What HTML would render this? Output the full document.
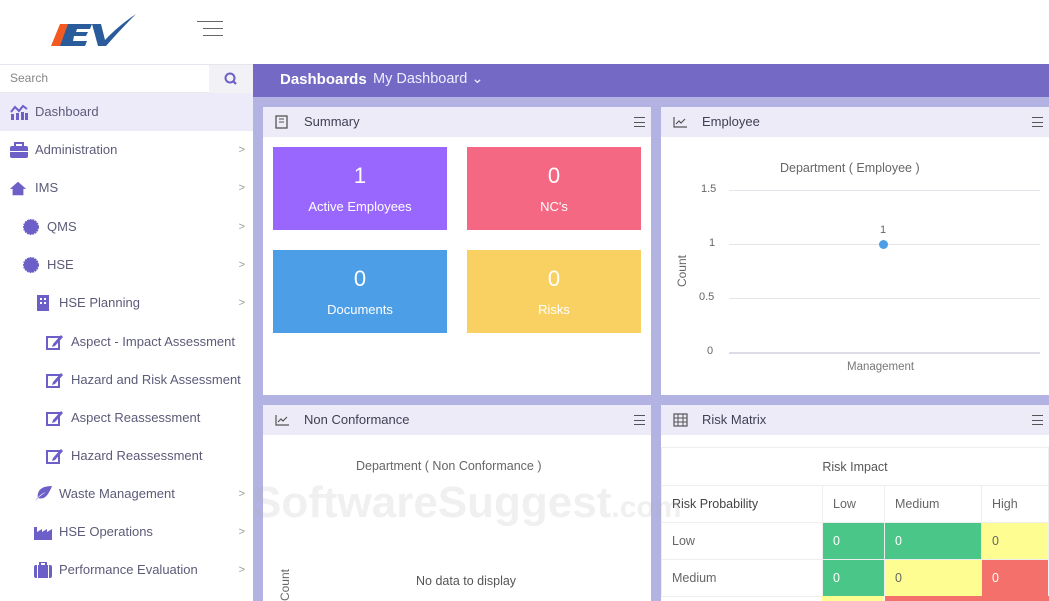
<!DOCTYPE html>
<html><head><meta charset="utf-8"><style>
*{box-sizing:border-box;margin:0;padding:0}
html,body{width:1049px;height:601px;overflow:hidden}
body{background:#fff;font-family:"Liberation Sans",sans-serif;font-size:13px;color:#555a6e;position:relative}
.abs{position:absolute}
.side{left:0;top:64px;width:253px;height:537px;background:#fff;border-top:1px solid #e6e6ee}
.item{position:absolute;left:0;width:253px;height:38px;line-height:38px;color:#5c5b78;font-size:13px}
.item .ic{position:absolute;top:11px;width:18px;height:16px}
.item .arr{position:absolute;right:8px;top:0;color:#999;font-size:11px}
.main{left:253px;top:64px;width:796px;height:537px;background:#b2b3e3}
.bar{left:253px;top:64px;width:796px;height:33px;background:#7469c4;color:#fff}
.panel{background:#fff;position:absolute;overflow:hidden}
.ph{height:30px;background:#edebf7;line-height:30px;font-size:13px;color:#3f3f55;position:relative}
.ph .t{position:absolute;left:41px}
.ph .m{position:absolute;right:6px;top:10px;width:11px;height:10px;border-top:1px solid #555;border-bottom:1px solid #555}
.ph .m:after{content:"";position:absolute;left:0;right:0;top:4px;border-top:1px solid #555}
.card{position:absolute;width:174px;height:83px;color:#fff;text-align:center}
.card b{display:block;font-size:22px;font-weight:normal;margin-top:16px}
.card span{display:block;font-size:13px;margin-top:10px}
table{border-collapse:collapse}
td{border:1px solid #eee;font-size:12.5px;color:#666;padding-left:10px}
.vt{writing-mode:vertical-rl;transform:rotate(180deg);font-size:12px;color:#666}
</style></head><body>
<svg class="abs" style="left:48px;top:12px" width="90" height="36" viewBox="0 0 90 36">
<polygon points="12,12 22,12 13,34 3,34" fill="#f25a22"/>
<polygon points="20,12 44,12 42,17 29,17 28,20 40,20 38,24 26,24 25,29 39,29 37,34 12,34" fill="#2a5b9a"/>
<path d="M44,12 L53,12 L57,28 Q70,14 88,2 Q72,18 58,34 L50,34 Z" fill="#2a5b9a"/>
</svg>
<div class="abs" style="left:197px;top:21px;width:26px;height:1px;background:#666"></div>
<div class="abs" style="left:203px;top:28px;width:20px;height:1px;background:#666"></div>
<div class="abs" style="left:203px;top:35px;width:20px;height:1px;background:#666"></div>

<div class="abs side">
 <div class="abs" style="left:0;top:0;width:209px;height:28px;line-height:26px;padding-left:10px;color:#888;font-size:12px;border-bottom:1px solid #e8e8ee">Search</div>
 <div class="abs" style="left:209px;top:0;width:44px;height:28px;background:#f2f2f6">
  <svg width="44" height="28"><circle cx="21" cy="13" r="4.5" fill="none" stroke="#6c5fc7" stroke-width="2"/><line x1="24" y1="16" x2="27" y2="19" stroke="#6c5fc7" stroke-width="2.2"/></svg></div>
</div>
<div class="item" style="top:93px;background:#edebfa"><svg class="ic" style="left:10px" viewBox="0 0 18 16"><path d="M1,8 L5,3 L9,7 L13,2 L17,5" fill="none" stroke="#6c5fc7" stroke-width="2"/><rect x="1" y="10" width="3" height="6" fill="#6c5fc7"/><rect x="6" y="9" width="3" height="7" fill="#6c5fc7"/><rect x="11" y="8" width="3" height="8" fill="#6c5fc7"/><rect x="15" y="9" width="3" height="7" fill="#6c5fc7"/></svg><span style="position:absolute;left:35px">Dashboard</span></div>
<div class="item" style="top:131px"><svg class="ic" style="left:10px" viewBox="0 0 18 16"><rect x="5" y="1" width="8" height="4" fill="none" stroke="#6c5fc7" stroke-width="2"/><rect x="0" y="4" width="18" height="12" rx="2" fill="#6c5fc7"/><rect x="0" y="9" width="18" height="1" fill="#fff"/></svg><span style="position:absolute;left:35px">Administration</span><span class="arr">&gt;</span></div>
<div class="item" style="top:169px"><svg class="ic" style="left:9px" viewBox="0 0 20 16"><path d="M10,1 L1,9 L4,9 L4,16 L16,16 L16,9 L19,9 Z" fill="#6c5fc7"/></svg><span style="position:absolute;left:35px">IMS</span><span class="arr">&gt;</span></div>
<div class="item" style="top:208px"><svg class="ic" style="left:22px" viewBox="0 0 18 18"><circle cx="9" cy="9" r="8" fill="#6c5fc7" stroke="#6c5fc7" stroke-width="2" stroke-dasharray="2 1"/></svg><span style="position:absolute;left:47px">QMS</span><span class="arr">&gt;</span></div>
<div class="item" style="top:246px"><svg class="ic" style="left:22px" viewBox="0 0 18 18"><circle cx="9" cy="9" r="8" fill="#6c5fc7" stroke="#6c5fc7" stroke-width="2" stroke-dasharray="2 1"/></svg><span style="position:absolute;left:47px">HSE</span><span class="arr">&gt;</span></div>
<div class="item" style="top:284px"><svg class="ic" style="left:34px" viewBox="0 0 16 16"><rect x="2" y="0" width="12" height="16" fill="#6c5fc7"/><rect x="5" y="3" width="2" height="2" fill="#fff"/><rect x="9" y="3" width="2" height="2" fill="#fff"/><rect x="5" y="7" width="2" height="2" fill="#fff"/><rect x="9" y="7" width="2" height="2" fill="#fff"/></svg><span style="position:absolute;left:59px">HSE Planning</span><span class="arr">&gt;</span></div>
<div class="item" style="top:323px"><svg class="ic" style="left:46px" viewBox="0 0 18 16"><rect x="1" y="3" width="12" height="12" fill="none" stroke="#6c5fc7" stroke-width="2"/><path d="M7,10 L15,1 L17,3 L9,12 L6,13 Z" fill="#6c5fc7"/></svg><span style="position:absolute;left:71px">Aspect - Impact Assessment</span></div>
<div class="item" style="top:361px"><svg class="ic" style="left:46px" viewBox="0 0 18 16"><rect x="1" y="3" width="12" height="12" fill="none" stroke="#6c5fc7" stroke-width="2"/><path d="M7,10 L15,1 L17,3 L9,12 L6,13 Z" fill="#6c5fc7"/></svg><span style="position:absolute;left:71px">Hazard and Risk Assessment</span></div>
<div class="item" style="top:399px"><svg class="ic" style="left:46px" viewBox="0 0 18 16"><rect x="1" y="3" width="12" height="12" fill="none" stroke="#6c5fc7" stroke-width="2"/><path d="M7,10 L15,1 L17,3 L9,12 L6,13 Z" fill="#6c5fc7"/></svg><span style="position:absolute;left:71px">Aspect Reassessment</span></div>
<div class="item" style="top:437px"><svg class="ic" style="left:46px" viewBox="0 0 18 16"><rect x="1" y="3" width="12" height="12" fill="none" stroke="#6c5fc7" stroke-width="2"/><path d="M7,10 L15,1 L17,3 L9,12 L6,13 Z" fill="#6c5fc7"/></svg><span style="position:absolute;left:71px">Hazard Reassessment</span></div>
<div class="item" style="top:475px"><svg class="ic" style="left:34px" viewBox="0 0 18 16"><path d="M1,15 Q6,8 12,6 Q6,10 4,12 Q10,14 14,8 Q17,3 18,0 Q8,0 5,5 Q3,9 4,12" fill="#6c5fc7"/></svg><span style="position:absolute;left:59px">Waste Management</span><span class="arr">&gt;</span></div>
<div class="item" style="top:513px"><svg class="ic" style="left:34px" viewBox="0 0 18 16"><path d="M0,16 L0,3 L3,3 L3,8 L8,5 L8,8 L13,5 L13,8 L18,5 L18,16 Z" fill="#6c5fc7"/></svg><span style="position:absolute;left:59px">HSE Operations</span><span class="arr">&gt;</span></div>
<div class="item" style="top:551px"><svg class="ic" style="left:34px" viewBox="0 0 18 16"><rect x="0" y="3" width="18" height="13" rx="2" fill="#6c5fc7"/><rect x="6" y="0" width="6" height="4" fill="none" stroke="#6c5fc7" stroke-width="2"/><rect x="3" y="3" width="1" height="13" fill="#fff"/><rect x="14" y="3" width="1" height="13" fill="#fff"/></svg><span style="position:absolute;left:59px">Performance Evaluation</span><span class="arr">&gt;</span></div>

<div class="abs main"></div>
<div class="abs bar"><span style="position:absolute;left:27px;top:7px;font-size:15px;font-weight:bold">Dashboards</span><span style="position:absolute;left:120px;top:7px;font-size:14.5px;color:#eef">My Dashboard &#8964;</span></div>

<div class="panel" style="left:263px;top:107px;width:388px;height:288px">
 <div class="ph"><svg style="position:absolute;left:12px;top:8px" width="14" height="14"><rect x="1" y="1" width="11" height="12" fill="none" stroke="#555" stroke-width="1.3"/><line x1="4" y1="4" x2="9" y2="4" stroke="#555"/><line x1="4" y1="7" x2="9" y2="7" stroke="#555"/></svg><span class="t">Summary</span><span class="m"></span></div>
 <div class="card" style="left:10px;top:40px;background:#9966fe"><b>1</b><span>Active Employees</span></div>
 <div class="card" style="left:204px;top:40px;background:#f46883"><b>0</b><span>NC's</span></div>
 <div class="card" style="left:10px;top:143px;background:#4c9fe6"><b>0</b><span>Documents</span></div>
 <div class="card" style="left:204px;top:143px;background:#f9d062"><b>0</b><span>Risks</span></div>
</div>
<div class="panel" style="left:661px;top:107px;width:388px;height:288px">
 <div class="ph"><svg style="position:absolute;left:12px;top:9px" width="15" height="12"><path d="M1,1 L1,11 L14,11 M3,8 L6,5 L8,7 L12,3" fill="none" stroke="#555" stroke-width="1.2"/></svg><span class="t">Employee</span><span class="m"></span></div>
 <div class="abs" style="left:119px;top:54px;font-size:12.5px;color:#666">Department ( Employee )</div>
 <div class="abs" style="left:40px;top:76px;font-size:11px;color:#666">1.5</div>
 <div class="abs" style="left:48px;top:130px;font-size:11px;color:#666">1</div>
 <div class="abs" style="left:38px;top:184px;font-size:11px;color:#666">0.5</div>
 <div class="abs" style="left:46px;top:238px;font-size:11px;color:#666">0</div>
 <div class="abs" style="left:68px;top:83px;width:311px;height:1px;background:#e4e4ea"></div>
 <div class="abs" style="left:68px;top:137px;width:311px;height:1px;background:#e4e4ea"></div>
 <div class="abs" style="left:68px;top:191px;width:311px;height:1px;background:#e4e4ea"></div>
 <div class="abs" style="left:68px;top:245px;width:311px;height:2px;background:#dcdce6"></div>
 <div class="abs" style="left:218px;top:133px;width:9px;height:9px;border-radius:50%;background:#4c9fe6"></div>
 <div class="abs" style="left:219px;top:117px;font-size:11px;color:#666">1</div>
 <div class="abs" style="left:186px;top:254px;font-size:11.5px;color:#777">Management</div>
 <div class="abs vt" style="left:14px;top:148px">Count</div>
</div>
<div class="panel" style="left:263px;top:405px;width:388px;height:196px">
 <div class="ph"><svg style="position:absolute;left:12px;top:9px" width="15" height="12"><path d="M1,1 L1,11 L14,11 M3,8 L6,5 L8,7 L12,3" fill="none" stroke="#555" stroke-width="1.2"/></svg><span class="t">Non Conformance</span><span class="m"></span></div>
 <div class="abs" style="left:93px;top:54px;font-size:12.5px;color:#666">Department ( Non Conformance )</div>
 <div class="abs" style="left:153px;top:169px;font-size:12.5px;color:#555">No data to display</div>
 <div class="abs vt" style="left:15px;bottom:0">Count</div>
</div>
<div class="panel" style="left:661px;top:405px;width:388px;height:196px">
 <div class="ph"><svg style="position:absolute;left:12px;top:8px" width="15" height="14"><rect x="1" y="1" width="13" height="12" fill="none" stroke="#555" stroke-width="1.2"/><path d="M1,5 H14 M1,9 H14 M5,1 V13 M10,1 V13" stroke="#555" stroke-width="1"/></svg><span class="t">Risk Matrix</span><span class="m"></span></div>
 <table class="abs" style="left:0;top:42px;width:388px">
  <tr style="height:38px"><td colspan="4" style="text-align:center;color:#555;padding:0">Risk Impact</td></tr>
  <tr style="height:37px"><td style="width:161px;color:#444">Risk Probability</td><td style="width:62px">Low</td><td style="width:97px">Medium</td><td>High</td></tr>
  <tr style="height:37px"><td>Low</td><td style="background:#4bc689;color:#fff">0</td><td style="background:#4bc689;color:#fff">0</td><td style="background:#fdfd92">0</td></tr>
  <tr style="height:37px"><td>Medium</td><td style="background:#4bc689;color:#fff">0</td><td style="background:#fdfd92">0</td><td style="background:#f4706a;color:#fff">0</td></tr>
 </table>
 <div class="abs" style="left:161px;top:191px;width:62px;height:10px;background:#fdfd92"></div>
 <div class="abs" style="left:224px;top:191px;width:164px;height:10px;background:#f4706a"></div>
</div>
<div class="abs" style="left:252px;top:478px;font-size:44px;font-weight:bold;color:rgba(170,170,170,0.18);white-space:nowrap">SoftwareSuggest<span style="font-size:30px">.com</span></div>
</body></html>
